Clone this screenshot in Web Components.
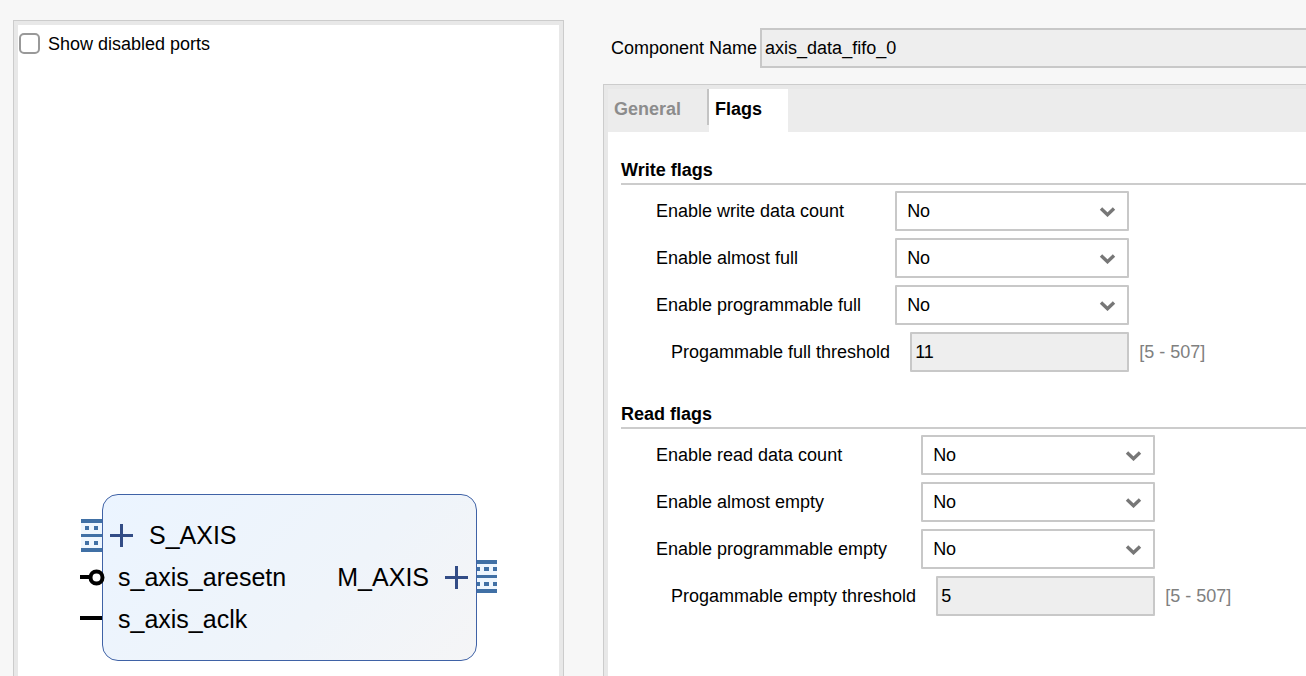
<!DOCTYPE html>
<html lang="en">
<head>
<meta charset="utf-8">
<title>axis_data_fifo_0</title>
<style>
    body{
        margin:0;
        background:#f7f7f7;
        color:#000;
        font:18px/22px "Liberation Sans", Arial, sans-serif;
    }
</style>
</head>
<body>
<ip-customizer>
    <ports-panel slot="preview">
        <block-symbol>
            <block-port kind="slave">S_AXIS</block-port>
            <block-port kind="reset">s_axis_aresetn</block-port>
            <block-port kind="clock">s_axis_aclk</block-port>
            <block-port kind="master" slot="out">M_AXIS</block-port>
        </block-symbol>
    </ports-panel>
    <component-name slot="options" value="axis_data_fifo_0"></component-name>
    <tab-panel slot="options" tabs="General,Flags" active="Flags">
        <flag-section>
            <span slot="title">Write flags</span>
            <flag-select>Enable write data count</flag-select>
            <flag-select>Enable almost full</flag-select>
            <flag-select>Enable programmable full</flag-select>
            <flag-threshold value="11" range="[5 - 507]">Progammable full threshold</flag-threshold>
        </flag-section>
        <flag-section>
            <span slot="title">Read flags</span>
            <flag-select>Enable read data count</flag-select>
            <flag-select>Enable almost empty</flag-select>
            <flag-select>Enable programmable empty</flag-select>
            <flag-threshold value="5" range="[5 - 507]">Progammable empty threshold</flag-threshold>
        </flag-section>
    </tab-panel>
</ip-customizer>

<script>
// registers an element whose shadow root is filled from the given markup
function define(name, html, setup){
    let template = document.createElement('template');
    template.innerHTML = html;
    customElements.define(
        name,
        class extends HTMLElement{
            constructor(){
                super();
                this.attachShadow({mode:'open'});
                this.shadowRoot.appendChild(template.content.cloneNode(true));
                if(setup) setup(this, this.shadowRoot);
            }
        }
    );
}

define('ip-customizer', `
<style>
    :host{
        display:grid;
        grid-template-columns:551fr 703fr;
        column-gap:39px;
        min-height:100vh;
        padding-left:13px;
        box-sizing:border-box;
    }
    .preview, .options{
        display:flex;
        flex-direction:column;
        min-width:0;
    }
    .preview{
        padding-top:20px;
    }
    .options{
        padding-top:28px;
        gap:16px;
    }
</style>
<div class="preview"><slot name="preview"></slot></div>
<div class="options"><slot name="options"></slot></div>`);

define('ports-panel', `
<style>
    :host{
        display:flex;
        flex:1;
        border:1px solid #ccc;
        border-bottom:0;
    }
    .canvas{
        display:flex;
        flex:1;
        flex-direction:column;
        border:4px solid #e8e8e8;
        border-bottom:0;
        background:#fff;
    }
    label{
        display:flex;
        align-items:flex-start;
        align-self:flex-start;
        gap:8px;
        padding:8px 1px;
    }
    input{
        appearance:none;
        width:21px;
        height:21px;
        margin:0;
        border:2px solid #999;
        border-radius:5px;
        background:#fff;
    }
    input:checked{
        background:#999;
    }
    .symbol{
        display:flex;
        justify-content:center;
        margin-top:auto;
        padding:16px 0 15px 2px;
    }
</style>
<div class="canvas">
    <label><input type="checkbox">Show disabled ports</label>
    <div class="symbol"><slot></slot></div>
</div>`);

define('block-symbol', `
<style>
    :host{
        display:flex;
        justify-content:space-between;
        align-items:center;
        width:375px;
        padding:19px 0 20px;
        box-sizing:border-box;
        border:1px solid #3f62a6;
        border-radius:16px;
        background:linear-gradient(135deg, #ebf4ff, #eff4fa 60%, #f5f5f6);
        font-size:25px;
        line-height:42px;
    }
</style>
<div><slot></slot></div>
<div><slot name="out"></slot></div>`);

let plus = `<svg class="plus" width="23" height="24"><path d="M0 12.5h23M11.5 1v23" stroke="#324c86" stroke-width="3"/></svg>`;

let pins = {
    slave:`<svg class="pin" width="26" height="34">
        <path d="M1 1h21v33H1z" fill="#eef6fe"/>
        <path d="M1 1h21v4H1zM1 16h21v3H1zM1 30h21v4H1zM5 8h4v4H5zM14 8h4v4h-4zM5 23h4v4H5zM14 23h4v4h-4z" fill="#4070a5"/>
    </svg>`,
    reset:`<svg class="pin" width="26" height="34">
        <path d="M0 17h10" stroke="#000" stroke-width="4"/>
        <circle cx="16.5" cy="17.5" r="6" fill="#fff" stroke="#000" stroke-width="4"/>
    </svg>`,
    clock:`<svg class="pin" width="26" height="34"><path d="M0 16h22" stroke="#000" stroke-width="4"/></svg>`,
    master:`<svg class="pin" width="22" height="34">
        <path d="M1 0h20v33H1z" fill="#eef6fe"/>
        <path d="M1 0h20v4H1zM1 15h20v3H1zM1 29h20v4H1zM1 7h3v4H1zM8 7h5v4H8zM17 7h4v4h-4zM1 22h3v4H1zM8 22h5v4H8zM17 22h4v4h-4z" fill="#4070a5"/>
    </svg>`
};

define('block-port', `
<style>
    :host{
        display:flex;
        align-items:center;
        height:42px;
    }
    :host([kind=master]){
        flex-direction:row-reverse;
    }
    svg{
        flex:none;
    }
    /* pins stick out of the block */
    .pin{
        margin-left:-23px;
        margin-right:12px;
    }
    :host([kind=slave]) .pin{
        margin-right:4px;
    }
    :host([kind=slave]) .plus{
        margin-right:16px;
    }
    :host([kind=master]) .pin{
        margin-left:8px;
        margin-right:-22px;
    }
    :host([kind=master]) .plus{
        margin-left:16px;
    }
</style>
<slot></slot>`, (host, root)=>{
    let kind = host.getAttribute('kind');
    let bus = kind == 'slave' || kind == 'master';
    let icons = document.createElement('template');
    icons.innerHTML = pins[kind] + (bus ? plus : '');
    root.insertBefore(icons.content, root.querySelector('slot'));
});

define('component-name', `
<style>
    :host{
        display:flex;
        align-items:center;
        gap:3px;
        padding-left:8px;
    }
    input{
        flex:1;
        min-width:0;
        height:40px;
        padding:0 3px;
        box-sizing:border-box;
        border:2px solid #c8c8c8;
        border-right:0;
        background:#eee;
        color:inherit;
        font:inherit;
    }
</style>
<label for="name">Component Name</label>
<input id="name" type="text" readonly>`, (host, root)=>{
    root.querySelector('input').value = host.getAttribute('value');
});

define('tab-panel', `
<style>
    :host{
        display:flex;
        flex:1;
        border:1px solid #ccc;
        border-width:1px 0 0 1px;
    }
    .frame{
        flex:1;
        min-width:0;
        border:4px solid #e8e8e8;
        border-width:4px 0 0 4px;
        background:#fff;
    }
    nav{
        display:flex;
        height:43px;
        background:#ececec;
    }
    button{
        padding:0 26px 3px 6px;
        border:0;
        background:none;
        color:#8c8c8c;
        font:inherit;
        font-weight:bold;
    }
    button[aria-selected=true]{
        background:#fff;
        color:#000;
    }
    .divider{
        width:2px;
        height:36px;
        background:#c4c4c4;
    }
    .page{
        display:flex;
        flex-direction:column;
        gap:31px;
        padding:27px 0 31px 13px;
    }
</style>
<div class="frame">
    <nav role="tablist"></nav>
    <div class="page" role="tabpanel"><slot></slot></div>
</div>`, (host, root)=>{
    let nav = root.querySelector('nav');
    host.getAttribute('tabs').split(',').forEach((name, i)=>{
        if(i){
            let divider = document.createElement('span');
            divider.className = 'divider';
            nav.appendChild(divider);
        }
        let button = document.createElement('button');
        button.type = 'button';
        button.textContent = name;
        button.setAttribute('role', 'tab');
        button.setAttribute('aria-selected', name == host.getAttribute('active'));
        button.addEventListener('click', ()=>{
            nav.querySelectorAll('button').forEach(b=>b.setAttribute('aria-selected', b == button));
            root.querySelector('.page').style.display = name == host.getAttribute('active')?"":"none";
        });
        nav.appendChild(button);
    });
});

define('flag-section', `
<style>
    :host{
        display:block;
    }
    h2{
        margin:0;
        padding-bottom:2px;
        border-bottom:2px solid #ccc;
        font-size:18px;
        line-height:22px;
    }
    /* the label column is as wide as the longest label */
    .rows{
        display:grid;
        grid-template-columns:auto 234px 1fr;
        align-items:center;
        gap:7px 5px;
        padding:6px 0 0 35px;
    }
</style>
<h2><slot name="title"></slot></h2>
<div class="rows"><slot></slot></div>`);

define('flag-select', `
<style>
    :host{
        display:contents;
    }
    label{
        grid-column:1;
    }
    .box{
        display:grid;
        align-items:center;
        grid-column:2;
    }
    select, svg{
        grid-area:1 / 1;
    }
    select{
        appearance:none;
        width:100%;
        height:40px;
        padding:0 40px 0 10px;
        border:2px solid #c8c8c8;
        border-radius:1px;
        background:#fff;
        color:inherit;
        font:inherit;
    }
    svg{
        justify-self:end;
        margin-right:13px;
        pointer-events:none;
    }
</style>
<label for="value"><slot></slot></label>
<div class="box">
    <select id="value"><option>No</option><option>Yes</option></select>
    <svg width="17" height="12"><path d="M2 3.5l6.5 6.2L15 3.5" fill="none" stroke="#777" stroke-width="3.4"/></svg>
</div>`);

define('flag-threshold', `
<style>
    :host{
        display:contents;
    }
    label{
        grid-column:1;
        padding-left:15px;
    }
    input{
        grid-column:2;
        min-width:0;
        height:40px;
        margin:0 0 0 15px;
        padding:0 3px;
        box-sizing:border-box;
        border:2px solid #c8c8c8;
        border-radius:1px;
        background:#eee;
        color:inherit;
        font:inherit;
    }
    .range{
        grid-column:3;
        padding-left:5px;
        color:#808080;
    }
</style>
<label for="value"><slot></slot></label>
<input id="value" type="text" readonly>
<span class="range"></span>`, (host, root)=>{
    root.querySelector('input').value = host.getAttribute('value');
    root.querySelector('.range').textContent = host.getAttribute('range');
});
</script>
</body>
</html>
